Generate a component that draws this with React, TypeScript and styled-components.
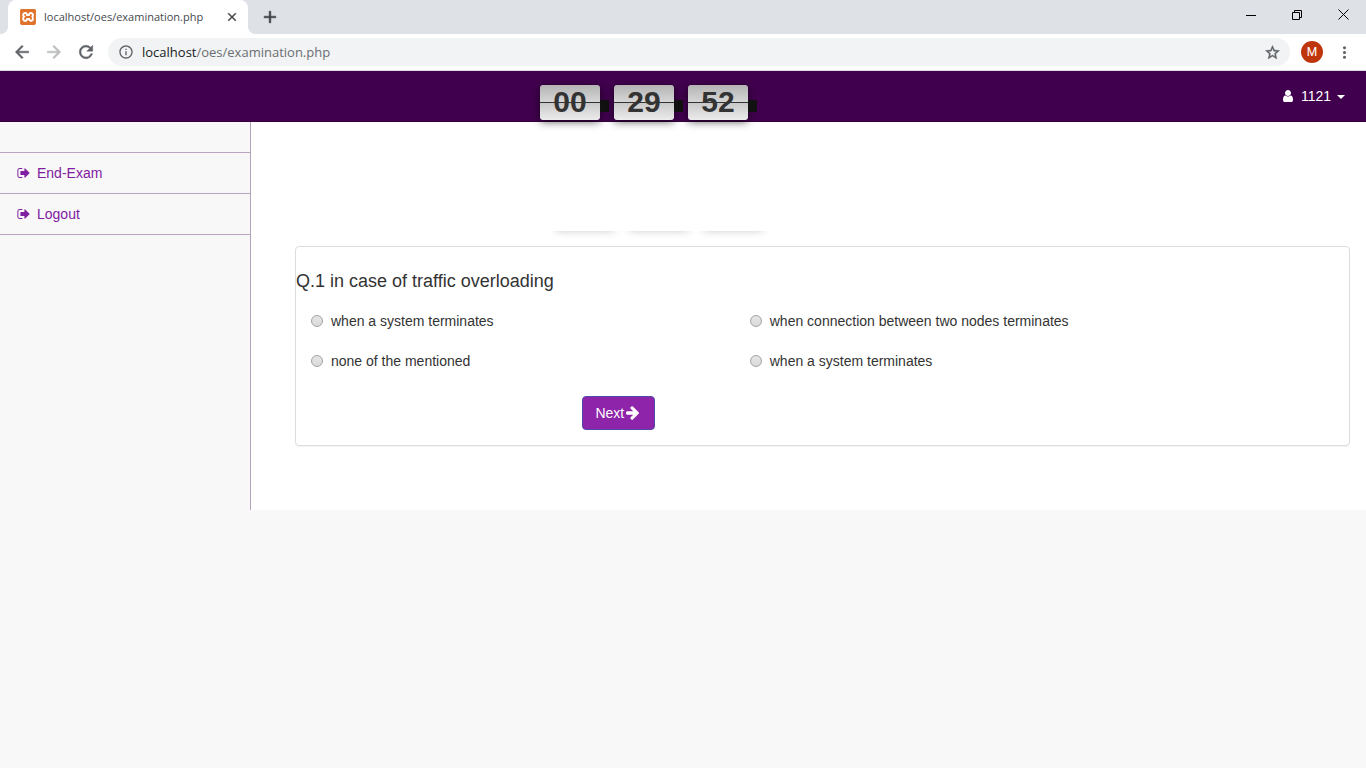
import React from "react";
import styled, { createGlobalStyle, css } from "styled-components";
import {
  MdArrowBack,
  MdArrowForward,
  MdRefresh,
  MdInfoOutline,
  MdStarBorder,
  MdMoreVert,
  MdClose,
  MdAdd,
} from "react-icons/md";
import { SiXampp } from "react-icons/si";

const GlobalStyle = createGlobalStyle`
  *, *::before, *::after { box-sizing: border-box; }
  html, body { margin: 0; padding: 0; }
  body {
    background: #f8f8f8;
    color: #333;
    font: 14px/20px "Liberation Sans", Arial, sans-serif;
  }
  button, input { font: inherit; margin: 0; }
`;

const chromeFont = css`
  font-family: "Open Sans", "Segoe UI", sans-serif;
`;

const TabStrip = styled.div`
  display: flex;
  align-items: stretch;
  height: 34px;
  padding-left: 8px;
  background: #dee1e6;
`;

const Tab = styled.div`
  ${chromeFont}
  position: relative;
  display: flex;
  align-items: center;
  width: 240px;
  padding: 0 8px 0 12px;
  border-radius: 8px 8px 0 0;
  background: #fff;
  color: #45494d;
  font-size: 11px;

  &::before,
  &::after {
    content: "";
    position: absolute;
    bottom: 0;
    width: 8px;
    height: 8px;
  }
  &::before {
    left: -8px;
    background: radial-gradient(circle at 0 0, #dee1e6 8px, #fff 8px);
  }
  &::after {
    right: -8px;
    background: radial-gradient(circle at 100% 0, #dee1e6 8px, #fff 8px);
  }
`;

const TabTitle = styled.span`
  flex: 1;
  margin-left: 8px;
  white-space: nowrap;
`;

const IconButton = styled.button<{ $size?: number; $color?: string; $bold?: boolean }>`
  display: flex;
  flex: none;
  align-items: center;
  justify-content: center;
  width: ${(p) => p.$size ?? 32}px;
  height: ${(p) => p.$size ?? 32}px;
  padding: 0;
  border: 0;
  background: none;
  color: ${(p) => p.$color ?? "#5f6368"};

  path:not([fill="none"]) {
    stroke: currentColor;
    stroke-width: ${(p) => (p.$bold ? 0.6 : 0)};
  }
`;

const NewTabButton = styled(IconButton)`
  align-self: center;
  margin-left: 6px;
`;

const WindowControls = styled.div`
  display: flex;
  margin-left: auto;
`;

const WindowButton = styled.button`
  display: flex;
  align-items: center;
  justify-content: center;
  width: 46px;
  height: 29px;
  padding: 0;
  border: 0;
  background: none;
  color: #000;
`;

const Toolbar = styled.div`
  display: flex;
  align-items: center;
  height: 37px;
  padding: 0 6px;
  border-bottom: 1px solid #dcdde0;
  background: #fff;
`;

const AddressBar = styled.div`
  display: flex;
  flex: 1;
  align-items: center;
  height: 28px;
  margin: 0 11px 0 6px;
  padding: 0 2px 0 10px;
  border-radius: 14px;
  background: #f1f3f4;
  color: #5f6368;
`;

const Address = styled.span`
  ${chromeFont}
  flex: 1;
  margin-left: 8px;
  color: #6a6e73;
  font-size: 13px;

  strong {
    color: #202124;
    font-weight: 400;
  }
`;

const Avatar = styled.button`
  width: 22px;
  height: 22px;
  margin-right: 5px;
  padding: 0;
  border: 0;
  border-radius: 50%;
  background: #bf360c;
  color: #fff;
  font: 12px/22px Roboto, sans-serif;
`;

const Navbar = styled.header`
  display: grid;
  grid-template-columns: 540fr 209px 617fr;
  align-items: center;
  height: 51px;
  border-bottom: 1px solid #38003f;
  background: #41004e;
`;

const Clock = styled.div`
  display: flex;
  grid-column: 2;
  gap: 14px;
  margin-top: 12px;
`;

const ClockCard = styled.div`
  position: relative;
  width: 60px;
  height: 35px;
  border-radius: 3px;
  background: linear-gradient(#b4b4b4, #d6d6d6 49%, #c8c8c8 51%, #ececec);
  box-shadow: 0 2px 8px rgba(0, 0, 0, 0.6);
  color: #333;
  font-size: 30px;
  font-weight: 700;
  line-height: 34px;
  text-align: center;

  &::before {
    content: "";
    position: absolute;
    top: 17px;
    left: 0;
    width: 100%;
    height: 1px;
    background: #333;
  }
  &::after {
    content: "";
    position: absolute;
    top: 15px;
    left: 100%;
    width: 9px;
    height: 12px;
    background: #111;
  }
`;

const UserMenu = styled.button`
  display: flex;
  grid-column: 3;
  align-items: center;
  justify-self: end;
  margin-right: 21px;
  padding: 0;
  border: 0;
  background: none;
  color: #fff;

  svg {
    margin-right: 8px;
  }
  &::after {
    content: "";
    margin: 2px 0 0 6px;
    border: 4px solid transparent;
    border-top-color: #fff;
    border-bottom: 0;
  }
`;

const Page = styled.div`
  display: flex;
  min-height: 388px;
`;

const Sidebar = styled.nav`
  flex: none;
  width: 251px;
  padding-top: 30px;
  border-right: 1px solid #b3a2b9;
  background: #f8f8f8;
`;

const SideList = styled.ul`
  margin: 0;
  padding: 0;
  border-top: 1px solid #b9a3c0;
  list-style: none;
`;

const SideLink = styled.a`
  display: flex;
  align-items: center;
  gap: 7px;
  padding: 10px 17px;
  border-bottom: 1px solid #b9a3c0;
  color: #8020a0;
  text-decoration: none;
`;

const Main = styled.main`
  flex: 1;
  padding: 109px 16px 64px 44px;
  background: #fff;
`;

const ShadowRow = styled.div`
  display: flex;
  gap: 14px;
  height: 10px;
  margin-bottom: 5px;
  padding-left: 24.6%;
  overflow: hidden;
`;

const FadedShadow = styled.div`
  width: 60px;
  height: 20px;
  margin-top: -22px;
  border-radius: 3px;
  box-shadow: 0 2px 8px rgba(0, 0, 0, 0.2);
`;

const Card = styled.form`
  padding: 15px 0;
  border: 1px solid #ddd;
  border-radius: 4px;
  box-shadow: 0 1px 1px rgba(0, 0, 0, 0.05);
`;

const Fieldset = styled.fieldset`
  min-width: 0;
  margin: 0;
  padding: 0;
  border: 0;
`;

const Question = styled.legend`
  padding: 9px 0 10px;
  font-size: 18px;
`;

const Options = styled.div`
  display: grid;
  grid-template-columns: 5fr 7fr;
`;

const Option = styled.label`
  display: flex;
  align-items: center;
  gap: 8px;
  height: 40px;
  padding-left: 15px;
`;

const Radio = styled.input`
  appearance: none;
  width: 12px;
  height: 12px;
  border: 1px solid #a3a3a3;
  border-radius: 50%;
  background: linear-gradient(#e6e6e6, #dadada);

  &:checked {
    background: radial-gradient(circle, #444 3px, #e0e0e0 4px);
  }
`;

const NextButton = styled.button`
  display: flex;
  align-items: center;
  gap: 2px;
  height: 34px;
  margin: 15px 0 0 27.2%;
  padding: 0 15px 0 12px;
  border: 1px solid #4f4aa8;
  border-radius: 4px;
  background: #8e24aa;
  color: #fff;
`;

const SignOutIcon = () => (
  <svg width="13" height="14" viewBox="0 0 1568 1792" fill="currentColor" aria-hidden="true">
    <path d="M640 1440q0 4 1 20t.5 26.500-3 23.500-10 19.500-20.500 6.500H288q-119 0-203.500-84.500T0 1248V544q0-119 84.500-203.500T288 256h320q13 0 22.500 9.500T640 288q0 4 1 20t.5 26.500-3 23.500-10 19.500T608 384H288q-66 0-113 47t-47 113v704q0 66 47 113t113 47h312l11.500 1 11.500 3 8 5.500 7 9 2 13.500zm928-544q0 26-19 45l-544 544q-19 19-45 19t-45-19-19-45v-288H448q-26 0-45-19t-19-45V704q0-26 19-45t45-19h448V352q0-26 19-45t45-19 45 19l544 544q19 19 19 45z" />
  </svg>
);

const UserIcon = () => (
  <svg width="10" height="14" viewBox="0 0 1280 1792" fill="currentColor" aria-hidden="true">
    <path d="M1280 1399q0 109-62.500 187t-150.500 78H213q-88 0-150.500-78T0 1399q0-85 8.500-160.500t31.500-152 58.500-131 94-89T327 832q131 128 313 128t313-128q76 0 134.500 34.500t94 89 58.500 131 31.500 152 8.500 160.500zm-256-887q0 159-112.500 271.500T640 896 368.500 783.500 256 512t112.500-271.500T640 128t271.500 112.500T1024 512z" />
  </svg>
);

const ArrowIcon = () => (
  <svg width="13" height="14" viewBox="0 160 1472 1600" fill="currentColor" aria-hidden="true">
    <path d="M1472 960q0 54-37 91l-651 651q-39 37-91 37-51 0-90-37l-75-75q-38-38-38-91t38-91l293-293H117q-52 0-84.500-37.500T0 1024V896q0-53 32.500-90.500T117 768h704L528 474q-38-36-38-90t38-90l75-75q38-38 90-38 53 0 91 38l651 651q37 35 37 90z" />
  </svg>
);

const options = [
  "when a system terminates",
  "when connection between two nodes terminates",
  "none of the mentioned",
  "when a system terminates",
];

export default function App() {
  return (
    <>
      <GlobalStyle />
      <TabStrip>
        <Tab>
          <SiXampp size={16} color="#e0732c" />
          <TabTitle>localhost/oes/examination.php</TabTitle>
          <IconButton $size={16} $color="#3c4043" $bold aria-label="Close tab">
            <MdClose size={14} />
          </IconButton>
        </Tab>
        <NewTabButton $color="#3c4043" $bold aria-label="New tab">
          <MdAdd size={20} />
        </NewTabButton>
        <WindowControls>
          <WindowButton aria-label="Minimize">
            <svg width="10" height="10" stroke="currentColor">
              <path d="M0 5.500h10" />
            </svg>
          </WindowButton>
          <WindowButton aria-label="Restore">
            <svg width="10" height="10" fill="none" stroke="currentColor">
              <path d="M.5 2.500h7v7h-7zM2.500 2.500v-2h7v7h-2" />
            </svg>
          </WindowButton>
          <WindowButton aria-label="Close">
            <svg width="11" height="11" stroke="currentColor">
              <path d="M.5.5l10 10M10.500.5l-10 10" />
            </svg>
          </WindowButton>
        </WindowControls>
      </TabStrip>
      <Toolbar>
        <IconButton $bold aria-label="Back">
          <MdArrowBack size={20} />
        </IconButton>
        <IconButton $bold $color="#babcbe" aria-label="Forward">
          <MdArrowForward size={20} />
        </IconButton>
        <IconButton $bold aria-label="Reload">
          <MdRefresh size={20} />
        </IconButton>
        <AddressBar>
          <MdInfoOutline size={16} />
          <Address>
            <strong>localhost</strong>/oes/examination.php
          </Address>
          <IconButton $bold aria-label="Bookmark this page">
            <MdStarBorder size={17} />
          </IconButton>
        </AddressBar>
        <Avatar aria-label="Profile">M</Avatar>
        <IconButton aria-label="Browser menu">
          <MdMoreVert size={19} />
        </IconButton>
      </Toolbar>

      <Navbar>
        <Clock role="timer">
          {["00", "29", "52"].map((value) => (
            <ClockCard key={value}>{value}</ClockCard>
          ))}
        </Clock>
        <UserMenu>
          <UserIcon />
          1121
        </UserMenu>
      </Navbar>

      <Page>
        <Sidebar>
          <SideList>
            {["End-Exam", "Logout"].map((label) => (
              <li key={label}>
                <SideLink href="#">
                  <SignOutIcon />
                  {label}
                </SideLink>
              </li>
            ))}
          </SideList>
        </Sidebar>
        <Main>
          <ShadowRow>
            <FadedShadow />
            <FadedShadow />
            <FadedShadow />
          </ShadowRow>
          <Card>
            <Fieldset>
              <Question>Q.1 in case of traffic overloading</Question>
              <Options>
                {options.map((text, i) => (
                  <Option key={i}>
                    <Radio type="radio" name="answer" value={i} />
                    {text}
                  </Option>
                ))}
              </Options>
            </Fieldset>
            <NextButton type="button">
              Next
              <ArrowIcon />
            </NextButton>
          </Card>
        </Main>
      </Page>
    </>
  );
}
